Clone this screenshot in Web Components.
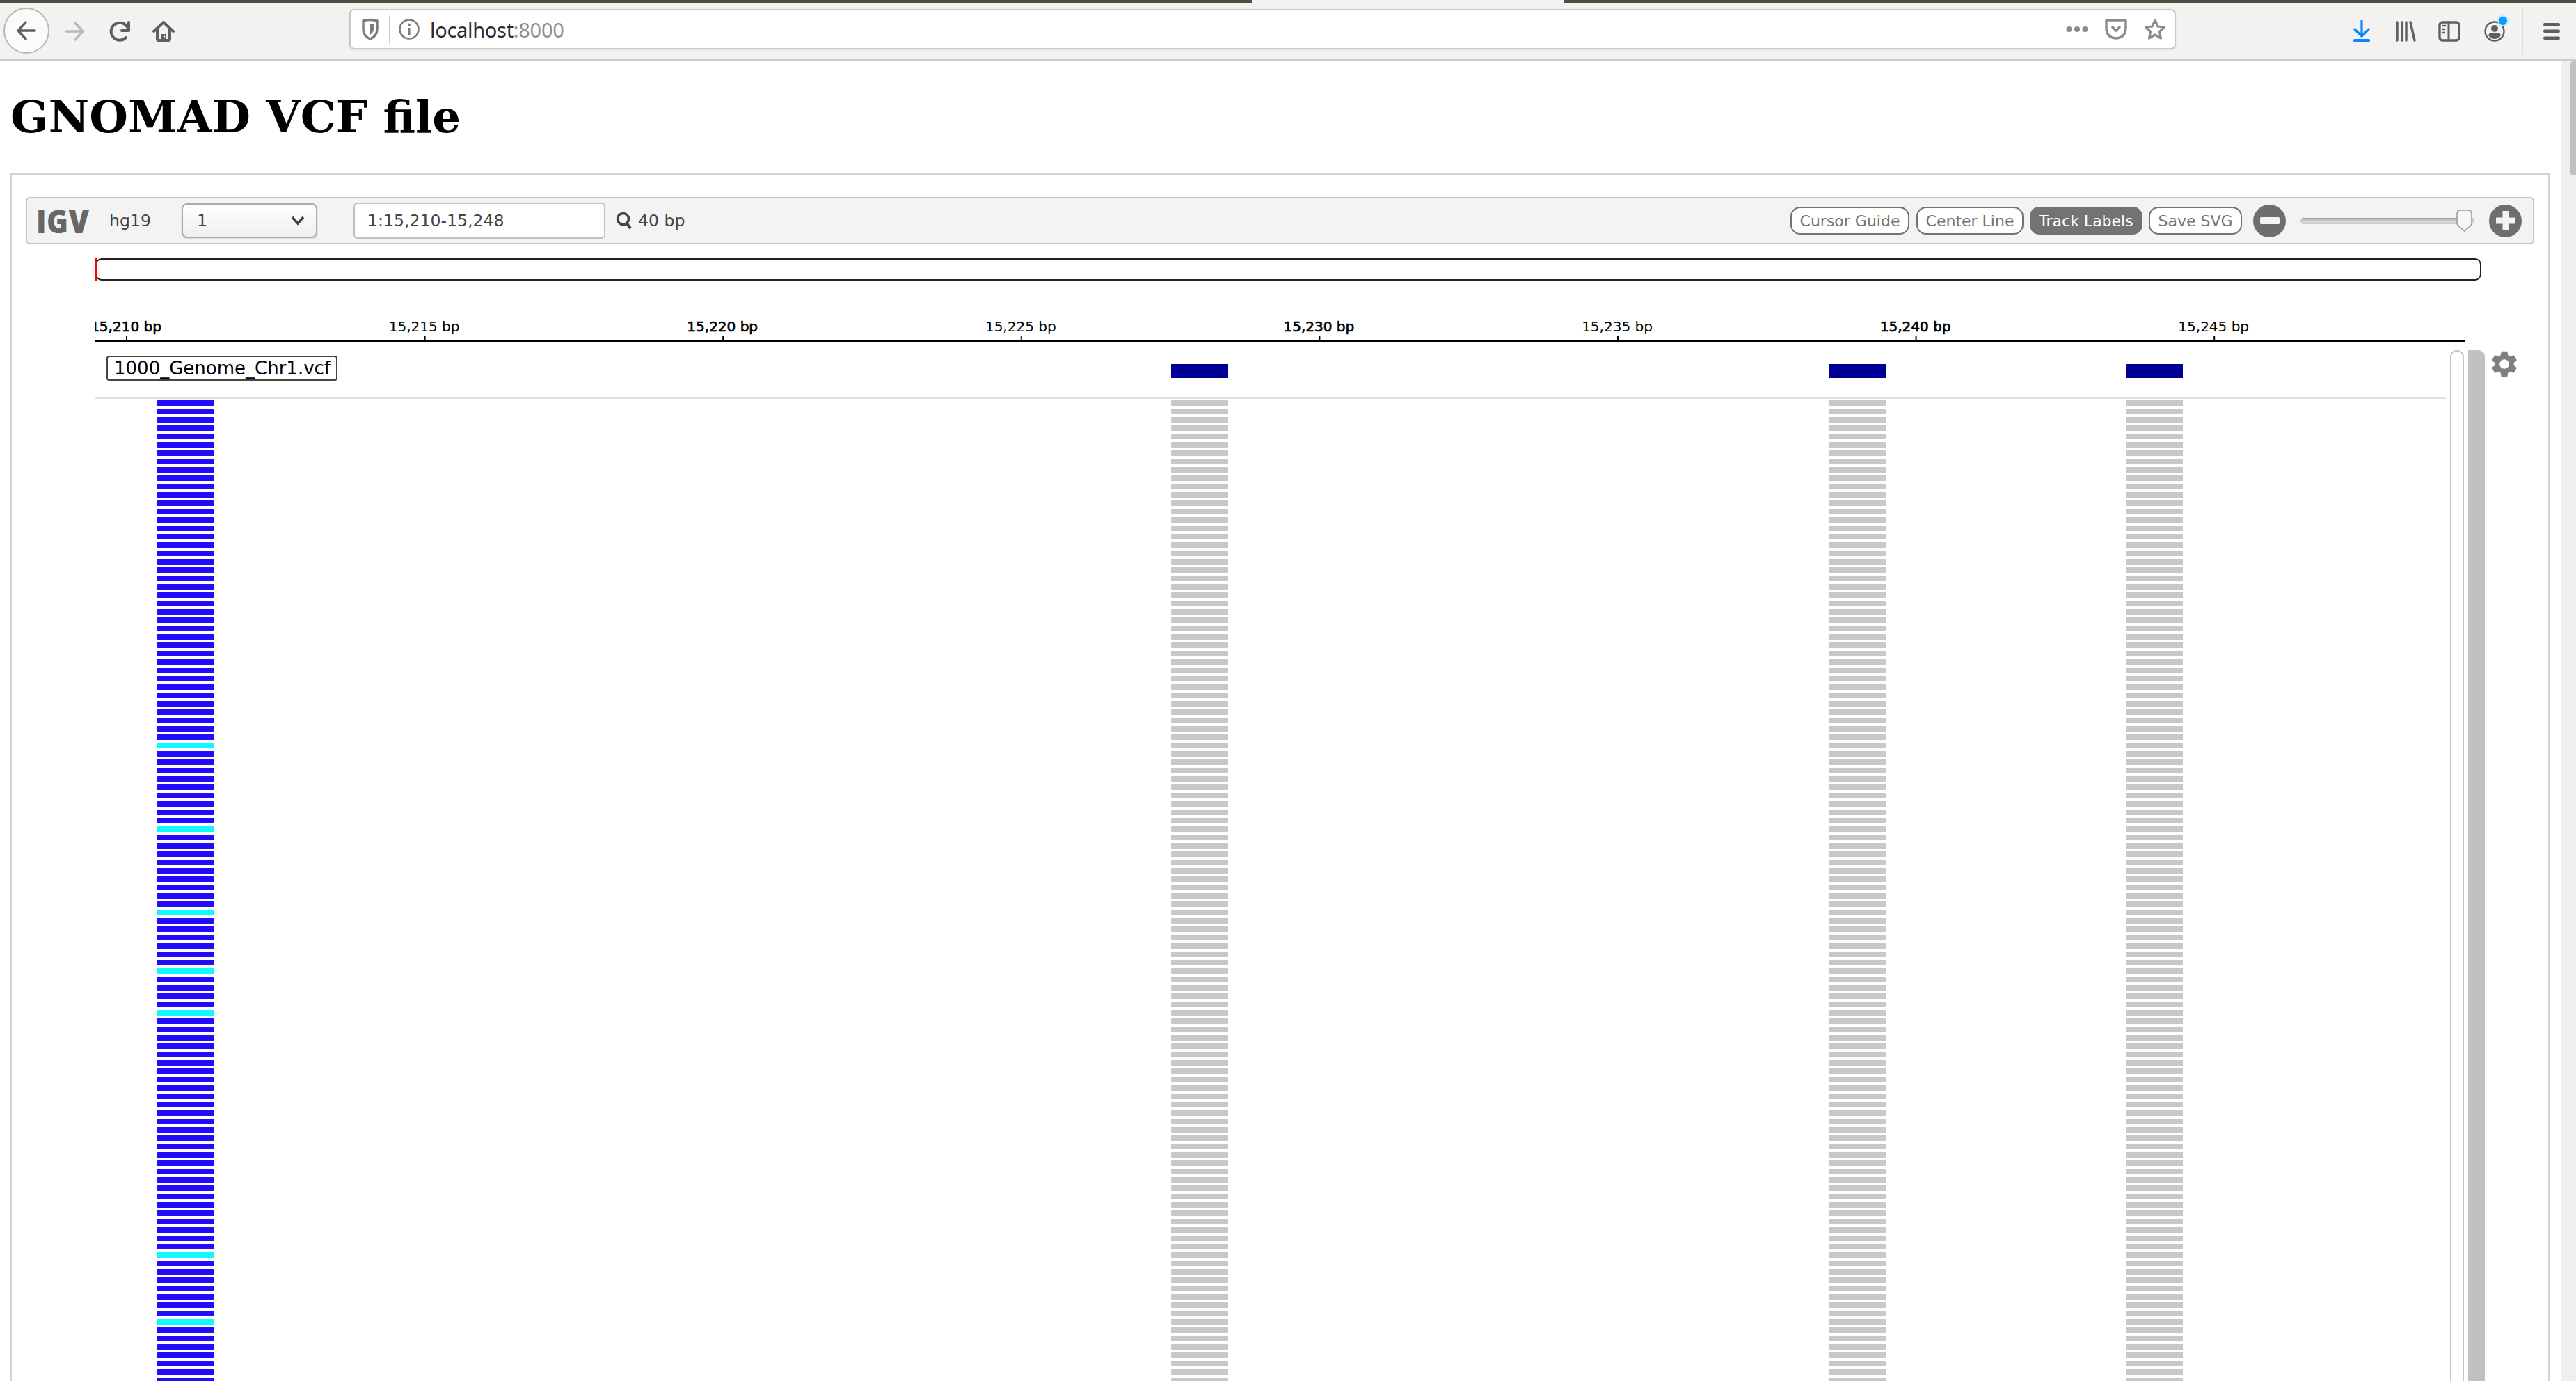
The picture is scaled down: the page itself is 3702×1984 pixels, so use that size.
<!DOCTYPE html>
<html><head><meta charset="utf-8"><title>GNOMAD VCF file</title>
<style>
html,body{margin:0;padding:0;height:1984px;overflow:hidden;background:#fff}
body{display:flex;flex-direction:column;font-family:"DejaVu Sans",sans-serif}
</style></head><body>
<ff-chrome></ff-chrome>
<page-view>
  <h1 slot="title">GNOMAD VCF file</h1>
  <igv-browser></igv-browser>
</page-view>
<script>
const def=(n,html,extra)=>{customElements.define(n,class extends HTMLElement{
  constructor(){super();this.attachShadow({mode:'open'}).innerHTML=html;}
  connectedCallback(){extra&&extra(this.shadowRoot,this);}
});};
const ico=(w,h,vb,body,style='')=>`<svg width="${w}" height="${h}" viewBox="${vb}" style="flex:none;${style}">${body}</svg>`;

def('ff-chrome',`<style>
:host{display:block;flex:none;height:88px;background:#f3f2f0;box-sizing:border-box;border-bottom:3px solid #cdccc9;font-family:"Noto Sans",sans-serif}
.strip{display:flex;height:4px;background:#4f4e43}.strip i{margin-left:1799px;width:448px;background:#f3f2f0}
.bar{display:flex;align-items:center;height:81px}
.back{flex:none;width:66px;height:66px;margin-left:5px;margin-top:-1px;border:2px solid #b9b8b6;background:#fbfbfa;border-radius:50%;display:flex;align-items:center;justify-content:center;box-sizing:border-box}
.nav{display:flex;align-items:center;justify-content:center;width:64px;flex:none}
.url{flex:none;display:flex;align-items:center;margin-left:235px;width:2625px;height:58px;box-sizing:border-box;background:#fff;border:2px solid #c8c7c4;border-radius:7px;box-shadow:0 1px 3px #0001;margin-top:-5px}
.sep{width:2px;height:42px;background:#cfcecc;margin:0 11px 0 15px}
.txt{font-size:29px;color:#2b2a33;letter-spacing:-.3px;margin-left:14px;white-space:nowrap}.txt span{color:#8e8e90}
.r{margin-left:auto;display:flex;align-items:center}
.tools{display:flex;align-items:center;margin-left:255px}
.vs{width:2px;height:68px;background:#dddcda;margin-left:24px}
</style><div class="strip"><i></i></div>
<div class="bar">
<div class="back">${ico(32,32,'0 0 32 32','<path d="M28 16H5M15 4L4 16l11 12" fill="none" stroke="#5f5f5f" stroke-width="3.4" stroke-linecap="round" stroke-linejoin="round"/>')}</div>
<div class="nav" style="margin-left:4px">${ico(32,32,'0 0 32 32','<path d="M4 16h23M17 4l11 12-11 12" fill="none" stroke="#b9b9b8" stroke-width="3.4" stroke-linecap="round" stroke-linejoin="round"/>')}</div>
<div class="nav">${ico(32,32,'0 0 32 32','<path d="M26 25A12.500 12.500 0 1 1 28 10M30 3v12H20" fill="none" stroke="#5f5f5f" stroke-width="4" stroke-linecap="round" stroke-linejoin="round"/>')}</div>
<div class="nav">${ico(32,32,'0 0 32 32','<path d="M2 16L16 3l14 13" fill="none" stroke="#5f5f5f" stroke-width="4" stroke-linecap="round" stroke-linejoin="round"/><path d="M7 13v14q0 2 2 2h14q2 0 2-2V13" fill="none" stroke="#5f5f5f" stroke-width="4"/><path d="M13 20h6q1 0 1 1v9h-8v-9q0-1 1-1z" fill="#5f5f5f"/><circle cx="17" cy="23.500" r="1.200" fill="#f3f2f0"/>')}</div>
<div class="url">
<span style="margin-left:16px;display:flex">${ico(24,32,'0 0 24 32','<path d="M2 4q10-3 20 0v12q0 10-10 14Q2 26 2 16z" fill="none" stroke="#7c7c7c" stroke-width="3.4"/><path d="M12 8h5v8q0 4-5 8z" fill="#7c7c7c"/>')}</span>
<span class="sep"></span>
${ico(32,32,'0 0 32 32','<circle cx="16" cy="16" r="13.5" fill="none" stroke="#7c7c7c" stroke-width="2.6"/><circle cx="16" cy="9.5" r="2" fill="#7c7c7c"/><path d="M16 14v10" stroke="#7c7c7c" stroke-width="3.2"/>')}
<span class="txt">localhost<span>:8000</span></span>
<div class="r">
${ico(32,10,'0 0 32 10','<circle cx="4.500" cy="5" r="4" fill="#8a8a8a"/><circle cx="16" cy="5" r="4" fill="#8a8a8a"/><circle cx="27.500" cy="5" r="4" fill="#8a8a8a"/>')}
${ico(32,30,'0 0 32 30','<path d="M3 2h26q1 0 1 1v10q0 14-14 15Q2 27 2 13V3q0-1 1-1z" fill="none" stroke="#8a8a8a" stroke-width="3.4"/><path d="M10 11l6 6 6-6" fill="none" stroke="#8a8a8a" stroke-width="3.4"/>','margin-left:24px')}
${ico(32,32,'0 0 32 32','<path d="M16 3l4 9 9.500 1-7 6.500 2 9.500-8.500-5-8.500 5 2-9.500-7-6.500 9.500-1z" fill="none" stroke="#8a8a8a" stroke-width="3.2" stroke-linejoin="round"/>','margin:0 12px 0 24px')}
</div></div>
<div class="tools">
${ico(26,32,'0 0 26 32','<path d="M13 1v22M3 13l10 10 10-10" fill="none" stroke="#0a84ff" stroke-width="3.2" stroke-linecap="round" stroke-linejoin="round"/><rect x="1" y="27" width="24" height="4.500" rx="2" fill="#0a84ff"/>','margin-left:-1px')}
${ico(30,30,'0 0 30 30','<g stroke="#5f5f5f" stroke-width="3.4" stroke-linecap="round"><path d="M3 2v26M10 2v26M16 2v26M22 2l6 26"/></g>','margin-left:35px')}
${ico(32,30,'0 0 32 30','<rect x="2" y="2" width="28" height="26" rx="4" fill="none" stroke="#5f5f5f" stroke-width="3.4"/><path d="M15 2v26" stroke="#5f5f5f" stroke-width="3"/><path d="M6 7h5M6 12h4M6 17h4" stroke="#5f5f5f" stroke-width="2.4"/>','margin-left:32px')}
<span style="position:relative;display:flex;margin-left:34px">${ico(30,30,'0 0 30 30','<circle cx="15" cy="15" r="13.500" fill="none" stroke="#5f5f5f" stroke-width="2.4"/><circle cx="15" cy="11" r="5" fill="#5f5f5f"/><path d="M6 21q1-4 5-4h8q4 0 5 4-4 5-9 5t-9-5z" fill="#5f5f5f"/>')}
<b style="position:absolute;left:21px;top:-6px;width:12px;height:12px;border-radius:50%;background:#0a9dff;box-shadow:0 0 0 2px #bfe6ff"></b></span>
<span class="vs"></span>
${ico(24,24,'0 0 24 24','<g fill="#5f5f5f"><rect y="0" width="24" height="4.500" rx="2"/><rect y="9.500" width="24" height="4.500" rx="2"/><rect y="19.500" width="24" height="4.500" rx="2"/></g>','margin-left:29px')}
</div></div>`);

def('page-view',`<style>
:host{display:flex;flex:1;min-height:0;overflow:hidden;position:relative}
.main{flex:1;min-width:0;padding:0 17px 0 15px;display:flex;flex-direction:column}
::slotted(h1){font:bold 64px "DejaVu Serif",serif;margin:36px 0 37px;height:88px;line-height:88px;color:#000;}
.bar{flex:none;width:21px;background:#f0efee;position:relative}
.bar i{position:absolute;right:0;top:0;width:8px;height:164px;background:#c1c1c1;border-radius:4px 0 0 4px}
</style><div class="main"><slot name="title"></slot><slot></slot></div><div class="bar"><i></i></div>`);

def('igv-button',`<style>
:host{display:flex;align-items:center;justify-content:center;height:40px;box-sizing:border-box;border:2px solid #737373;border-radius:14px;background:#fff;color:#737373;font:22px "DejaVu Sans",sans-serif;white-space:nowrap}
:host([on]){background:#737373;color:#fff}
</style><slot></slot>`);

def('igv-navbar',`<style>
:host{display:flex;align-items:center;height:68px;box-sizing:border-box;margin:32px 20px 0 20px;background:#f3f3f3;border:2px solid #c4c4c4;border-radius:6px;color:#444;font:23.600px "DejaVu Sans",sans-serif}
.logo{font:800 42px "Open Sans","DejaVu Sans",sans-serif;color:#666;width:72px;margin-left:13px;letter-spacing:.5px;transform:scaleY(1.08)}
.g{margin-left:33px;width:104px}
.sel{display:flex;align-items:center;justify-content:space-between;box-sizing:border-box;width:195px;height:50px;border:2px solid #aaa;border-radius:8px;background:linear-gradient(#fff,#efefef);padding:0 16px 0 20px;box-shadow:0 1px 2px #0002}
.in{box-sizing:border-box;width:362px;height:52px;margin-left:52px;background:#fff;border:2px solid #c0c0c0;border-radius:6px;padding:0 18px;display:flex;align-items:center;white-space:nowrap}
.bp{margin-left:8px}
.r{margin-left:auto;display:flex;align-items:center;margin-right:16px}
.r igv-button+igv-button{margin-left:9px}
.btn{flex:none;width:47px;height:47px;border-radius:50%;background:#6e6e6e;display:flex;align-items:center;justify-content:center}
.slider{flex:none;width:250px;height:32px;margin:0 21px;position:relative;display:flex;align-items:center}
.slider i{display:block;box-sizing:border-box;width:100%;height:9px;background:linear-gradient(#a8a8a8,#c4c4c4 30%,#e6e6e6);border:1px solid #c8c8c8;border-top-color:#a0a0a0;border-radius:5px}
</style>
<span class="logo">IGV</span><span class="g">hg19</span>
<span class="sel"><span>1</span>${ico(20,14,'0 0 20 14','<path d="M2 2l8 9 8-9" fill="none" stroke="#444" stroke-width="3.6"/>')}</span>
<span class="in">1:15,210-15,248</span>
${ico(24,26,'0 0 24 26','<circle cx="10.500" cy="10.500" r="8" fill="none" stroke="#444" stroke-width="3.600"/><path d="M15 16l6 8" stroke="#444" stroke-width="4"/>','margin-left:15px')}
<span class="bp">40 bp</span>
<div class="r"><igv-button style="width:171px">Cursor Guide</igv-button><igv-button style="width:154px;margin-left:10px">Center Line</igv-button><igv-button on style="width:162px">Track Labels</igv-button><igv-button style="width:134px">Save SVG</igv-button>
<span class="btn" style="margin-left:16px">${ico(28,10,'0 0 28 10','<rect width="28" height="10" rx="1.500" fill="#f3f3f3"/>')}</span>
<span class="slider"><i></i>${ico(23,32,'0 0 23 32','<path d="M1 6q0-5 5-5h11q5 0 5 5v14q0 2-2 3.500L11.500 31 3 23.500Q1 22 1 20z" fill="#f6f6f6" stroke="#999" stroke-width="1.500"/>','position:absolute;right:3px;top:0')}</span>
<span class="btn">${ico(28,28,'0 0 28 28','<path d="M9.500 0h9v9.500H28v9h-9.500V28h-9v-9.500H0v-9h9.500z" fill="#f3f3f3"/>')}</span>
</div>`);

def('igv-ruler',`<style>:host{display:block;height:88px;margin-left:120px;width:3406px;position:relative;overflow:hidden}
svg{display:block}text{font:20px "DejaVu Sans",sans-serif;fill:#000;text-anchor:middle}</style><svg width="3406" height="88"></svg>`,
(root)=>{const s=root.querySelector('svg');let h='<rect x="0" y="86" width="3406" height="2"/>';
 [15210,15215,15220,15225,15230,15235,15240,15245].forEach((bp,i)=>{const x=44+i*428.6;
  h+=`<rect x="${x}" y="79" width="2" height="8"/><text x="${x}" y="73" style="${i%2==0?'stroke:#000;stroke-width:.7px':''}">${bp.toLocaleString('en-US')} bp</text>`;});
 s.innerHTML=h;});

const COLS=[88,1546,2491,2918],W=82;
const CYAN=[41,51,61,68,73,102,110];
def('variant-track',`<style>
:host{display:block;flex:none;width:3378px;position:relative;overflow:hidden}
.lab{position:absolute;left:16px;top:20px;height:36px;box-sizing:border-box;border:2px solid #444;border-radius:4px;background:#fff;display:flex;align-items:center;padding:0 8px 0 9px;color:#000;font:26px "DejaVu Sans",sans-serif;white-space:nowrap}
svg{display:block}
</style><svg width="3378" height="1493"></svg><span class="lab">1000_Genome_Chr1.vcf</span>`,
(root)=>{const s=root.querySelector('svg');let h='';
 COLS.forEach(x=>h+=`<rect x="${x}" y="32" width="${W}" height="20" fill="rgb(0,0,150)"/>`);
 h+='<rect x="0" y="80" width="3378" height="2" fill="#e1e1e1"/>';
 const cy=new Set(CYAN);
 for(let r=0;r<118;r++){const y=84+r*12;
  COLS.forEach((x,i)=>{const c=i?'rgb(200,200,200)':(cy.has(r)?'rgb(17,248,254)':'rgb(34,12,253)');h+=`<rect x="${x}" y="${y}" width="${W}" height="8" fill="${c}"/>`;});}
 s.innerHTML=h;});

def('igv-browser',`<style>
:host{display:block;flex:1;min-height:0;border:2px solid #d2d2d2;border-bottom:0;overflow:hidden}
.chr{box-sizing:border-box;height:32px;width:3429px;margin:20px 0 0 120px;border:2.500px solid #222;border-radius:9px;position:relative}
.chr i{position:absolute;left:-2.500px;top:-2.500px;bottom:-2.500px;width:3px;background:#f00}
.row{display:flex;margin-left:120px;height:1493px}
.sc{flex:none;width:20px;box-sizing:border-box;margin:12px 0 0 6px;border:2px solid #c4c4c4;border-bottom:0;border-radius:9px 9px 0 0}
.th{flex:none;width:24px;margin:12px 0 0 6px;background:#c1c1c1;border-radius:0 9px 0 0}
.gear{flex:none;margin:13px 0 0 9px;height:38px}
</style>
<igv-navbar></igv-navbar>
<div class="chr"><i></i></div>
<igv-ruler></igv-ruler>
<div class="row"><variant-track></variant-track><span class="sc"></span><span class="th"></span>
<span class="gear">${ico(38,38,'2 2 20 20','<path fill="#7f7f7f" d="M19.140 12.940c.04-.3.060-.61.060-.94 0-.32-.02-.64-.07-.94l2.030-1.580a.49.49 0 0 0 .12-.61l-1.920-3.320a.49.49 0 0 0-.59-.22l-2.390.96c-.5-.38-1.030-.7-1.620-.94l-.36-2.540a.48.48 0 0 0-.48-.41h-3.840a.48.48 0 0 0-.47.41l-.36 2.540c-.59.24-1.130.57-1.620.94l-2.390-.96a.48.48 0 0 0-.59.22L2.710 8.870a.48.48 0 0 0 .12.61l2.030 1.580c-.05.3-.09.63-.09.94s.02.640.07.940l-2.030 1.580a.49.49 0 0 0-.12.61l1.920 3.320c.12.22.37.290.59.220l2.390-.96c.5.38 1.030.7 1.620.94l.36 2.540c.05.24.24.41.48.41h3.840c.24 0 .44-.17.47-.41l.36-2.540c.59-.24 1.130-.56 1.620-.94l2.390.96c.22.080.47 0 .59-.22l1.920-3.320a.48.48 0 0 0-.12-.61zM12 15.600A3.600 3.600 0 1 1 12 8.400a3.600 3.600 0 0 1 0 7.200z"/>')}</span></div>`);
</script>
</body></html>
